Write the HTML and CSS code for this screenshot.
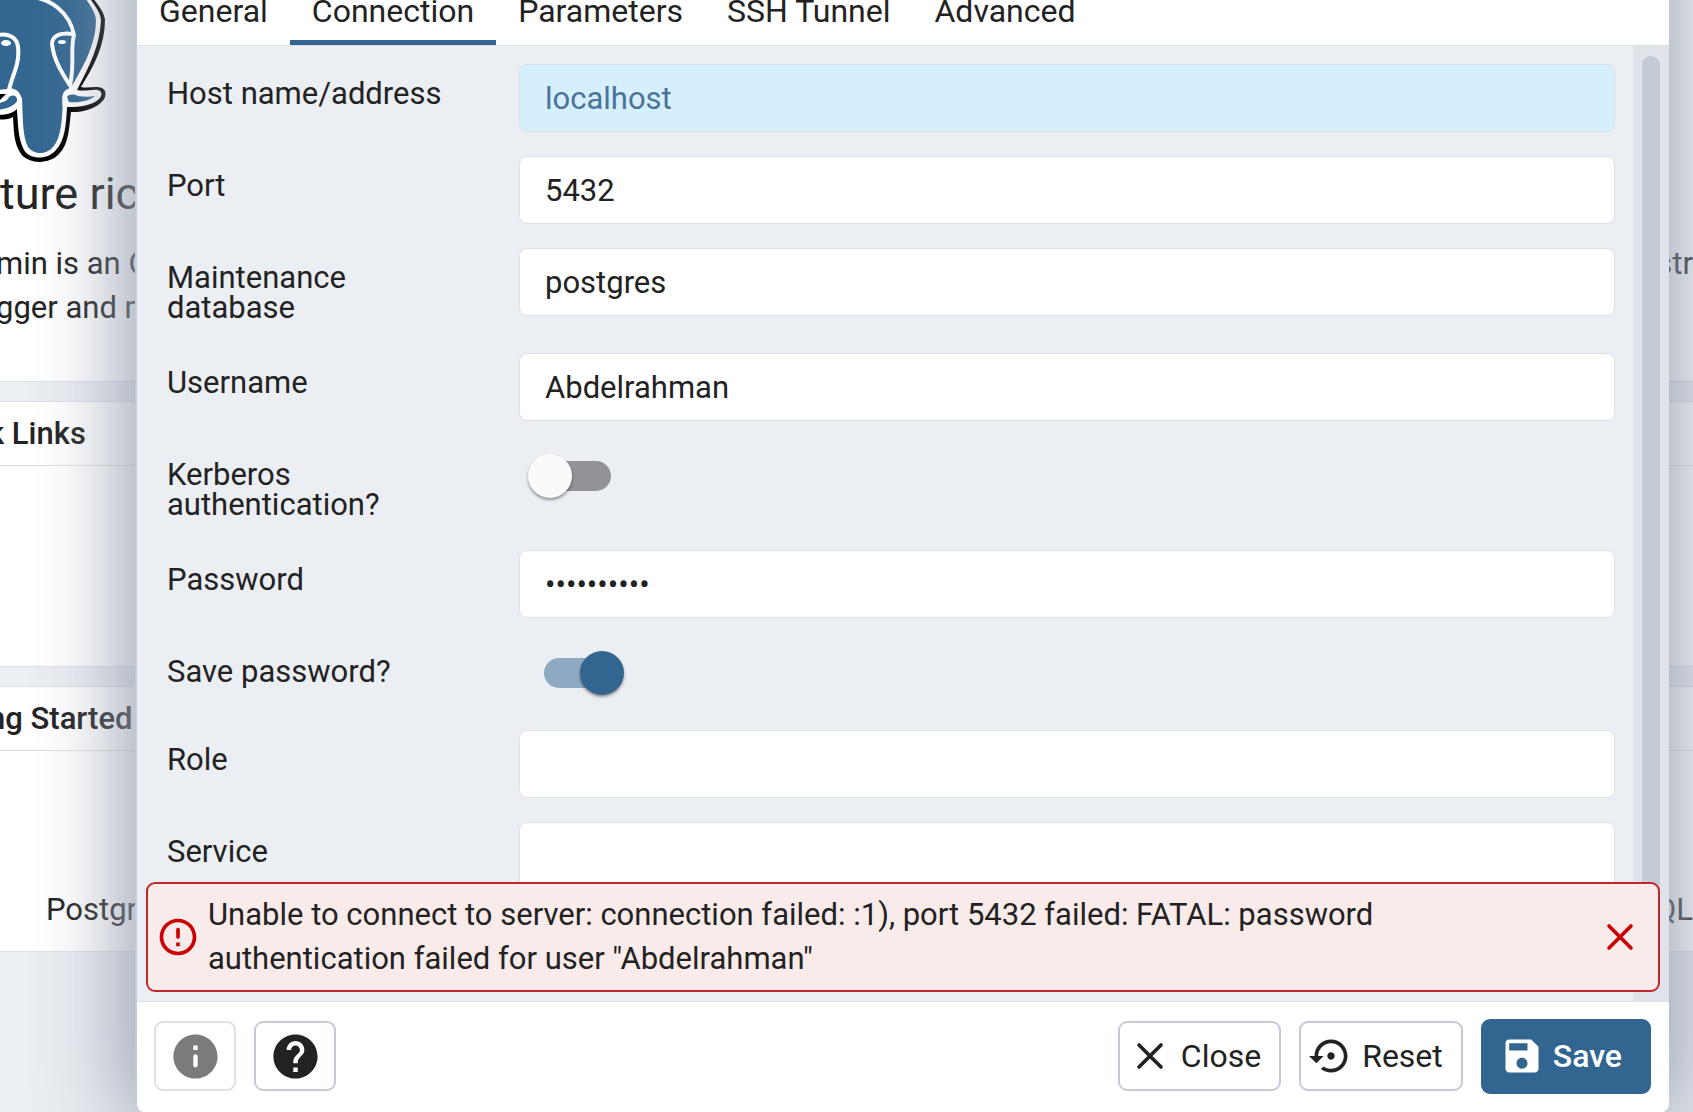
FILE: index.html
```html
<!DOCTYPE html>
<html lang="en">
<head>
<meta charset="utf-8">
<title>Register - Server</title>
<link rel="stylesheet" href="styles.css">
</head>
<body>
<main class="welcome" aria-label="Welcome">
  <section class="card intro">
    <svg class="elephant" viewBox="0 0 110 166" aria-hidden="true">
      <path class="ink" d="M-10 -20 L82 -20 C90 -2 104 8 105 20 C105 45 94 66 81 87 C90 89 101 84 105 91 C109 102 90 113 71 112 C69 128 69 144 59 154 C50 164 30 165 21 154 C13 142 14 128 13 117 C8 120 0 120 -10 119 Z"/>
      <path class="edge" d="M-10 -20 L80 -20 C88 0 100 8 101 20 C100 45 90 65 77 90 C86 92 98 87 101 92 C104 100 88 108 67 107 C66 125 65 140 56 150 C48 160 30 160 24 150 C18 138 18 125 17 109 C10 116 0 115 -10 114 Z"/>
      <path class="skin" d="M-10 -20 L76 -20 C84 0 95 8 96 20 C96 42 86 62 73 84 L63 98 C62 122 61 138 53 147 C46 155 34 155 28 147 C22 135 23 115 22 98 L12 89 L-10 91 Z"/>
      <path class="skin" d="M67 97 C69 94 74 94 78 96 C84 97 90 97 95 96 C89 101 79 103 69 102 Z"/>
      <path class="skin" d="M-10 104 C0 104 8 101 9 97 C13 94 18 96 17 101 C12 109 0 110 -10 110 Z"/>
      <path class="ink" d="M-4 94 L6 94 L0 100 Z"/>
      <path class="line" d="M28 -3 C50 -3 70 13 74 35 C70 50 75 64 70 85 M73 34 C62 32 52 35 52 44 C54 62 64 76 73 90 C64 90 63 96 65 108 M-2 35 C8 33 17 37 18 47 C20 65 12 75 9 90 C20 91 21 98 19 112 M-4 92 L10 91"/>
      <ellipse class="eye" cx="62" cy="42" rx="4" ry="2"/><ellipse class="eye" cx="6" cy="43" rx="5" ry="3"/>
    </svg>
    <h1 class="headline">ture rich</h1>
    <p class="blurb"><span>min is an O</span><span>str</span></p>
    <p class="blurb"><span>gger and m</span></p>
  </section>
  <section class="card links">
    <h2 class="card-title">k Links</h2>
  </section>
  <section class="card started">
    <h2 class="card-title">ng Started</h2>
    <p class="card-foot"><span>Postgre</span><span>QL</span></p>
  </section>
</main>

<div class="dialog" role="dialog" aria-label="Register - Server">
  <nav class="tabs" role="tablist">
    <button class="tab" role="tab">General</button>
    <button class="tab active" role="tab" aria-selected="true">Connection</button>
    <button class="tab" role="tab">Parameters</button>
    <button class="tab" role="tab">SSH Tunnel</button>
    <button class="tab" role="tab">Advanced</button>
  </nav>
  <div class="body">
    <form class="fields" id="server">
      <div class="row"><label for="host">Host name/address</label><input class="text focus" id="host" type="text" value="localhost"></div>
      <div class="row"><label for="port">Port</label><input class="text" id="port" type="text" value="5432"></div>
      <div class="row tall"><label for="db">Maintenance database</label><input class="text" id="db" type="text" value="postgres"></div>
      <div class="row"><label for="user">Username</label><input class="text" id="user" type="text" value="Abdelrahman"></div>
      <div class="row tall"><label for="krb">Kerberos authentication?</label><input class="switch" id="krb" type="checkbox"></div>
      <div class="row"><label for="pw">Password</label><input class="text" id="pw" type="password" value="postgres12"></div>
      <div class="row short"><label for="save">Save password?</label><input class="switch" id="save" type="checkbox" checked></div>
      <div class="row"><label for="role">Role</label><input class="text" id="role" type="text"></div>
      <div class="row"><label for="service">Service</label><input class="text" id="service" type="text"></div>
    </form>
    <div class="scroll"><div class="thumb"></div></div>
    <div class="alert" role="alert">
      <svg class="icon" viewBox="0 0 24 24" aria-hidden="true"><path d="M12 7c.55 0 1 .45 1 1v4c0 .55-.45 1-1 1s-1-.45-1-1V8c0-.55.45-1 1-1zm-.01-5C6.47 2 2 6.48 2 12s4.47 10 9.99 10C17.52 22 22 17.52 22 12S17.52 2 11.99 2zM12 20c-4.42 0-8-3.58-8-8s3.58-8 8-8 8 3.58 8 8-3.58 8-8 8zm1-3h-2v-2h2v2z"/></svg>
      <p class="message">Unable to connect to server: connection failed: :1), port 5432 failed: FATAL: password authentication failed for user "Abdelrahman"</p>
      <button class="dismiss" aria-label="Dismiss"><svg class="icon" viewBox="0 0 24 24" aria-hidden="true"><path class="cross" d="M6 6 18 18M18 6 6 18"/></svg></button>
    </div>
  </div>
  <footer class="footer">
    <button class="btn square muted" aria-label="Info"><svg class="icon big" viewBox="0 0 24 24" aria-hidden="true"><path d="M12 2C6.48 2 2 6.48 2 12s4.48 10 10 10 10-4.48 10-10S17.52 2 12 2zm0 15c-.55 0-1-.45-1-1v-4c0-.55.45-1 1-1s1 .45 1 1v4c0 .55-.45 1-1 1zm1-8h-2V7h2v2z"/></svg></button>
    <button class="btn square" aria-label="Help"><svg class="icon big" viewBox="0 0 24 24" aria-hidden="true"><path d="M12 2C6.48 2 2 6.48 2 12s4.48 10 10 10 10-4.48 10-10S17.52 2 12 2zm1 17h-2v-2h2v2zm2.07-7.75-.9.92C13.45 12.9 13 13.5 13 15h-2v-.5c0-1.1.45-2.1 1.17-2.83l1.24-1.26c.37-.36.59-.86.59-1.41 0-1.1-.9-2-2-2s-2 .9-2 2H8c0-2.21 1.79-4 4-4s4 1.79 4 4c0 .88-.36 1.68-.93 2.25z"/></svg></button>
    <span class="spacer"></span>
    <button class="btn"><svg class="icon" viewBox="0 0 24 24" aria-hidden="true"><path class="cross" d="M6 6 18 18M18 6 6 18"/></svg>Close</button>
    <button class="btn"><svg class="icon" viewBox="0 0 24 24" aria-hidden="true"><path d="M14 12c0-1.1-.9-2-2-2s-2 .9-2 2 .9 2 2 2 2-.9 2-2zm-2-9c-4.97 0-9 4.03-9 9H0l4 4 4-4H5c0-3.87 3.13-7 7-7s7 3.13 7 7-3.13 7-7 7c-1.51 0-2.91-.49-4.06-1.3l-1.42 1.44C8.04 20.3 9.94 21 12 21c4.97 0 9-4.03 9-9s-4.03-9-9-9z"/></svg>Reset</button>
    <button class="btn primary"><svg class="icon" viewBox="0 0 24 24" aria-hidden="true"><path d="M17 3H5c-1.11 0-2 .9-2 2v14c0 1.1.89 2 2 2h14c1.1 0 2-.9 2-2V7l-4-4zm-5 16c-1.66 0-3-1.34-3-3s1.34-3 3-3 3 1.34 3 3-1.34 3-3 3zm3-10H5V5h10v4z"/></svg>Save</button>
  </footer>
</div>
</body>
</html>
```
FILE: styles.css
```css
* { box-sizing: border-box; }
html { height: 100%; }
body {
  margin: 0;
  min-height: 100%;
  position: relative;
  overflow: hidden;
  background: #ebeef3;
  color: #222;
  font: 31px/44px Roboto, sans-serif;
}
h1, h2, p { margin: 0; font-weight: 400; }
button, input { font: inherit; color: inherit; margin: 0; }

/* Page behind the dialog */
.welcome { display: flex; flex-direction: column; gap: 19px; }
.card { background: #fff; border-bottom: 1px solid #dde0e6; }
.links, .started { border-top: 1px solid #dde0e6; height: 266px; }
.intro { height: 382px; display: flex; flex-direction: column; }
.elephant { width: 110px; height: 166px; flex: none; }
.ink { fill: #000; }
.edge, .eye { fill: #fff; }
.skin { fill: #336791; }
.line { fill: none; stroke: #fff; stroke-width: 4; stroke-linecap: round; }
.headline { font-size: 45px; line-height: 56px; margin-bottom: 20px; }
.blurb, .card-foot { display: flex; justify-content: space-between; }
.blurb { margin-left: -4px; }
.started { display: flex; flex-direction: column; justify-content: space-between; }
.card-title { font-size: 31px; font-weight: 500; line-height: 62px; padding-top: 1px; border-bottom: 1px solid #dde0e6; text-indent: -12px; }
.card-foot { padding: 0 0 19px 46px; }

/* Server dialog; its title bar is scrolled out above the window */
.dialog {
  position: absolute;
  inset: -80px 24px 0 135px;
  padding-top: 80px;
  display: flex;
  flex-direction: column;
  background: #ebeef3;
  border-left: 2px solid #c4cad6;
  border-radius: 0 0 8px 8px;
  box-shadow: 0 0 84px 14px rgba(151, 159, 175, .95);
}
.tabs { display: flex; height: 46px; background: #fff; border-bottom: 1px solid #dde0e6; font-size: 32px; }
.tab {
  height: 45px;
  padding: 0 22px 18px;
  line-height: 22px;
  border: 0;
  border-bottom: 5px solid transparent;
  background: none;
}
.tab.active { border-bottom-color: #326690; }
.body { position: relative; flex: 1; min-height: 0; display: flex; overflow: hidden; }
.fields { flex: 1; padding: 18px 18px 0 30px; display: flex; flex-direction: column; gap: 24px; }
.row { display: grid; grid-template-columns: 352px 1fr; align-items: start; flex: none; height: 68px; }
.row.tall { height: 81px; }
.row.short { height: 64px; }
.row label { padding: 15px 60px 0 0; line-height: 30px; }
.text {
  width: 100%;
  height: 68px;
  padding: 0 25px;
  border: 1px solid #dde0e6;
  border-radius: 8px;
  background: #fff;
  outline: 0;
}
.text.focus { background: #d6effc; color: #4b7399; }
.switch {
  appearance: none;
  position: relative;
  width: 96px;
  height: 44px;
  margin: 9px 0 0 9px;
}
.switch::before {
  content: "";
  position: absolute;
  inset: 7px 13px 7px 16px;
  border-radius: 15px;
  background: #929396;
}
.switch::after {
  content: "";
  position: absolute;
  left: 0;
  width: 44px;
  height: 44px;
  border-radius: 50%;
  background: #fafafa;
  box-shadow: 0 2px 3px rgba(0, 0, 0, .4);
}
.switch:checked::before { background: #8fa9c3; }
.switch:checked::after { left: 52px; background: #326690; }
.scroll { width: 36px; padding: 10px 9px 60px; background: #e0e3ea; display: flex; }
.thumb { flex: 1; border-radius: 9px; background: #c4cad6; }
.alert {
  position: absolute;
  inset: auto 9px 9px 9px;
  display: flex;
  align-items: center;
  gap: 8px;
  padding: 9px 16px 9px 8px;
  border: 2px solid #c1272b;
  border-radius: 9px;
  background: #faebeb;
}
.message { flex: 1; padding-right: 160px; }
.icon { width: 44px; height: 44px; flex: none; fill: currentColor; display: block; }
.icon.big { width: 53px; height: 53px; }
.cross { fill: none; stroke: currentColor; stroke-width: 2; stroke-linecap: round; }
.alert > .icon, .dismiss { color: #c00; }
.dismiss { padding: 0; border: 0; background: none; }
.footer {
  display: flex;
  align-items: center;
  gap: 18px;
  height: 111px;
  padding: 0 18px 2px 17px;
  background: #fff;
  border-top: 1px solid #dde0e6;
  border-radius: 0 0 8px 8px;
  font-size: 32px;
}
.spacer { flex: 1; }
.btn {
  display: flex;
  align-items: center;
  justify-content: center;
  gap: 9px;
  height: 70px;
  padding: 0 18px 0 8px;
  border: 2px solid #c4cad6;
  border-radius: 9px;
  background: #fff;
}
.btn.square { width: 82px; padding: 0; }
.btn.muted { color: #7b7b7b; border-color: #dde0e6; }
.btn.primary { height: 75px; padding: 0 27px 0 17px; background: #326690; border-color: #326690; color: #fff; font-weight: 500; }
```
